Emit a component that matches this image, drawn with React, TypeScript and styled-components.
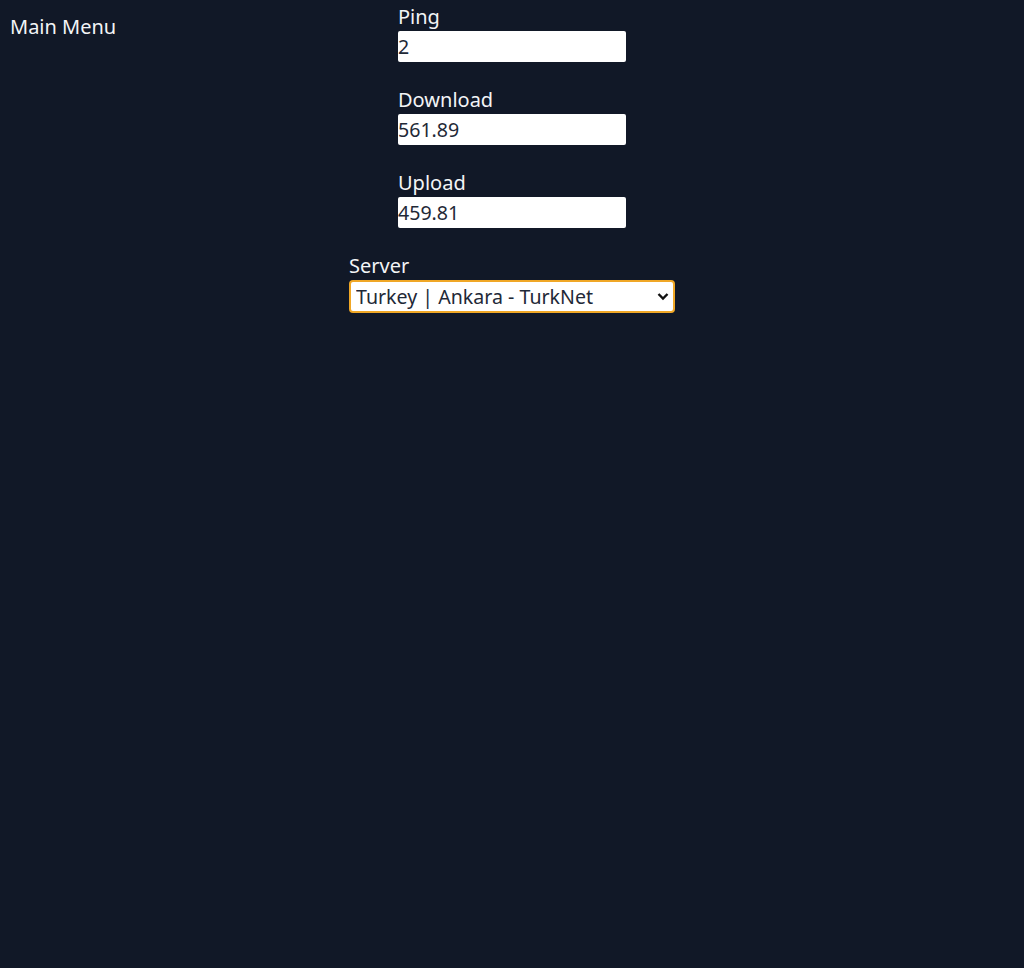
import React from "react";
import styled, { createGlobalStyle } from "styled-components";

const Global = createGlobalStyle`
  html, body { margin: 0; padding: 0; background: #111827; }
  body { font-family: "Noto Sans", "Open Sans", sans-serif; color: #f3f4f6; }
  #root { min-height: 968px; }
`;

const Page = styled.div`
  display: grid;
  grid-template-columns: 1fr auto 1fr;
  min-height: 968px;
  background: #111827;
`;

const Nav = styled.div`
  padding: 13px 10px;
  font-size: 20px;
  line-height: 28px;
  color: #f3f4f6;
`;

const Form = styled.div`
  display: flex;
  flex-direction: column;
  align-items: center;
  padding-top: 3px;
`;

const Field = styled.div<{ $gap?: number }>`
  display: flex;
  flex-direction: column;
  margin-bottom: ${(p) => p.$gap ?? 24}px;
`;

const Label = styled.label`
  font-size: 20px;
  line-height: 28px;
  color: #f3f4f6;
`;

const Input = styled.input`
  box-sizing: border-box;
  width: 228px;
  height: 31px;
  padding: 0;
  border: none;
  border-radius: 2px;
  background: #ffffff;
  color: #1f2937;
  font-family: "Noto Sans", sans-serif;
  font-size: 19.6px;
  outline: none;
`;

const SelectBox = styled.div`
  position: relative;
  width: 326px;
`;

const Select = styled.select`
  box-sizing: border-box;
  width: 326px;
  height: 33px;
  padding: 0 30px 0 5px;
  border: 2px solid #f0a726;
  border-radius: 4px;
  background: #ffffff;
  color: #1f2937;
  font-family: "Noto Sans", sans-serif;
  font-size: 19.6px;
  appearance: none;
  outline: none;
`;

const Chevron = styled.svg`
  position: absolute;
  right: 6px;
  top: 12px;
  pointer-events: none;
`;

export default function App() {
  return (
    <>
      <Global />
      <Page>
        <Nav>Main Menu</Nav>
        <Form>
          <Field>
            <Label>Ping</Label>
            <Input defaultValue="2" />
          </Field>
          <Field>
            <Label>Download</Label>
            <Input defaultValue="561.89" />
          </Field>
          <Field>
            <Label>Upload</Label>
            <Input defaultValue="459.81" />
          </Field>
          <Field $gap={0}>
            <Label>Server</Label>
            <SelectBox>
              <Select defaultValue="tr">
                <option value="tr">Turkey | Ankara - TurkNet</option>
              </Select>
              <Chevron width="12" height="9" viewBox="0 0 12 9">
                <path d="M1.5 2 L6 6.5 L10.5 2" fill="none" stroke="#111" strokeWidth="2.4" />
              </Chevron>
            </SelectBox>
          </Field>
        </Form>
        <div />
      </Page>
    </>
  );
}
